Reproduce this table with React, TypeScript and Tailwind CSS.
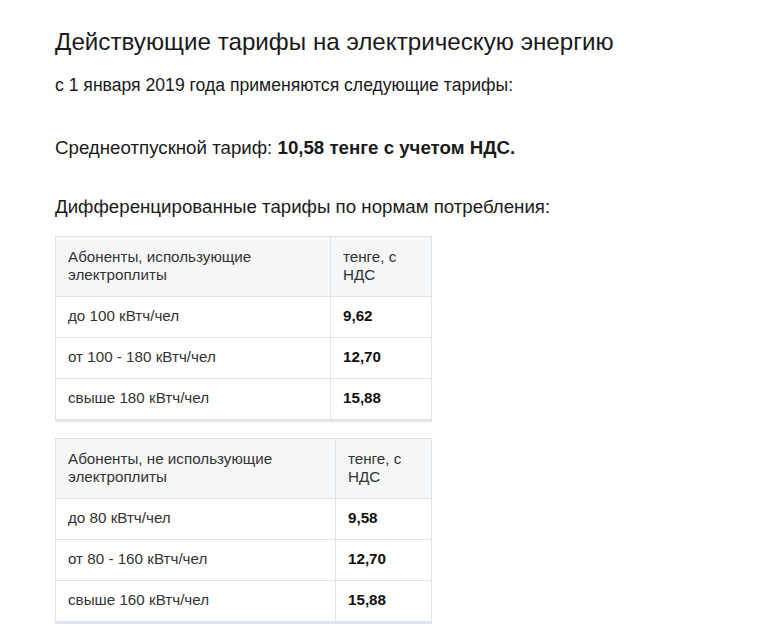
import React from "react";

type Row = { label: string; value: string };

const TariffTable: React.FC<{ title: string; firstCol: string; rows: Row[] }> = ({ title, firstCol, rows }) => (
  <table className="w-[377px] border-collapse border border-[#dde3e8] shadow-[0_2px_0_#dfe5ea] text-[15.2px] leading-[18px] text-[#333]">
    <tbody>
      <tr className="bg-[#f5f7f9]">
        <td className={`${firstCol} border border-[#dde3e8] px-3 pt-[11px] pb-[12px] align-top`}>{title}</td>
        <td className="border border-[#dde3e8] px-3 pt-[11px] pb-[12px] align-top">
          тенге, с
          <br />
          НДС
        </td>
      </tr>
      {rows.map((r) => (
        <tr key={r.label}>
          <td className="border border-[#dde3e8] px-3 pt-[10px] pb-[12px]">{r.label}</td>
          <td className="border border-[#dde3e8] px-3 pt-[10px] pb-[12px] font-bold text-[#111]">{r.value}</td>
        </tr>
      ))}
    </tbody>
  </table>
);

export default function App() {
  return (
    <main className="min-h-screen bg-white px-[55px] pt-[27px] font-['Liberation_Sans',Arial,sans-serif] text-[#1a1a1a]">
      <h1 className="text-[24.2px] leading-[30px]">Действующие тарифы на электрическую энергию</h1>
      <p className="mt-[18px] text-[17.6px] leading-[20px]">с 1 января 2019 года применяются следующие тарифы:</p>

      <p className="mt-[41px] text-[18.7px] leading-[24px]">
        Среднеотпускной тариф: <b>10,58 тенге с учетом НДС.</b>
      </p>

      <p className="mt-[35px] text-[18.7px] leading-[24px]">Дифференцированные тарифы по нормам потребления:</p>

      <div className="mt-[17px] flex flex-col gap-[18px]">
        <TariffTable
          title="Абоненты, использующие электроплиты"
          firstCol="w-[275px]"
          rows={[
            { label: "до 100 кВтч/чел", value: "9,62" },
            { label: "от 100 - 180 кВтч/чел", value: "12,70" },
            { label: "свыше 180 кВтч/чел", value: "15,88" },
          ]}
        />
        <TariffTable
          title="Абоненты, не использующие электроплиты"
          firstCol="w-[280px]"
          rows={[
            { label: "до 80 кВтч/чел", value: "9,58" },
            { label: "от 80 - 160 кВтч/чел", value: "12,70" },
            { label: "свыше 160 кВтч/чел", value: "15,88" },
          ]}
        />
      </div>
    </main>
  );
}
